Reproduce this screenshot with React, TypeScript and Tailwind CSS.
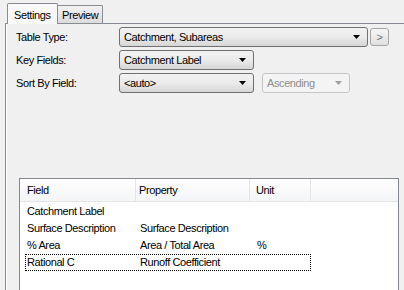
const FONT = "font-['Liberation_Sans',Arial,sans-serif] text-[11px] tracking-[-0.4px] text-black";

const ROWS = [
  { field: "Catchment Label", property: "", unit: "" },
  { field: "Surface Description", property: "Surface Description", unit: "" },
  { field: "% Area", property: "Area / Total Area", unit: "%" },
  { field: "Rational C", property: "Runoff Coefficient", unit: "", focused: true },
];

function Arrow({ disabled }: { disabled?: boolean }) {
  return (
    <svg width="7" height="4" viewBox="0 0 7 4" className="shrink-0">
      <path d="M0 0h7L3.5 4z" fill={disabled ? "#a0a0a0" : "#000"} />
    </svg>
  );
}

function Combo({ text, width, disabled }: { text: string; width: string; disabled?: boolean }) {
  return (
    <div
      className={
        disabled
          ? `${width} h-[20px] flex items-center justify-between pl-[4px] pr-[7px] rounded-[3px] border border-[#c2c6c9] bg-[#f4f4f4] text-[#8d8d8d]`
          : `${width} h-[20px] flex items-center justify-between pl-[4px] pr-[7px] rounded-[3px] border border-[#707070] bg-gradient-to-b from-[#f2f2f2] via-[#ebebeb] to-[#d6d6d6]`
      }
    >
      <span>{text}</span>
      <Arrow disabled={disabled} />
    </div>
  );
}

function Label({ children }: { children: string }) {
  return <div className="w-[103px] shrink-0">{children}</div>;
}

export default function App() {
  return (
    <div className={`w-[404px] h-[290px] overflow-hidden bg-[#f0f0f0] ${FONT}`}>
      {/* Tabs */}
      <div className="flex items-end h-[23px] pl-[7px]">
        <div className="h-[21px] w-[51px] relative top-[1px] z-10 border border-b-0 border-[#898c95] bg-[#f9f9f9] pl-[6px] pt-[3px] rounded-t-[2px]">
          Settings
        </div>
        <div className="h-[18px] w-[45px] border border-l-0 border-b-0 border-[#898c95] bg-gradient-to-b from-[#f2f2f2] to-[#dcdcdc] pl-[4px] pt-[1px] rounded-tr-[2px]">
          Preview
        </div>
      </div>

      {/* Panel */}
      <div className="ml-[5px] h-[267px] border-l border-t border-[#898c95]">
        <div className="h-full border-l border-white pt-[3px] pl-[9px]">
          <div className="flex flex-col gap-[3px]">
            <div className="flex items-center h-[20px]">
              <Label>Table Type:</Label>
              <Combo text="Catchment, Subareas" width="w-[249px]" />
              <div className="ml-[2px] w-[19px] h-[18px] rounded-[3px] border border-[#a5a5a5] bg-gradient-to-b from-[#f6f6f6] to-[#e0e0e0] flex items-center justify-center text-[#707070]">
                &gt;
              </div>
            </div>
            <div className="flex items-center h-[20px]">
              <Label>Key Fields:</Label>
              <Combo text="Catchment Label" width="w-[135px]" />
            </div>
            <div className="flex items-center h-[20px]">
              <Label>Sort By Field:</Label>
              <Combo text="<auto>" width="w-[135px]" />
              <div className="ml-[8px]">
                <Combo text="Ascending" width="w-[88px]" disabled />
              </div>
            </div>
          </div>

          {/* List view */}
          <div className="mt-[85px] ml-[3px] w-[380px] h-[120px] border border-[#828790] bg-white">
            <div className="flex h-[23px] border-b border-[#e5e5e5] bg-gradient-to-b from-white to-[#f4f5f7]">
              <div className="w-[116px] pl-[7px] flex items-center border-r border-[#e5e5e5]">Field</div>
              <div className="w-[114px] pl-[3px] flex items-center border-r border-[#e5e5e5]">Property</div>
              <div className="w-[61px] pl-[6px] flex items-center border-r border-[#e5e5e5]">Unit</div>
              <div className="flex-1" />
            </div>
            <div className="pt-[1px] pl-[5px]">
              {ROWS.map((row) => (
                <div
                  key={row.field}
                  className={
                    row.focused
                      ? "flex h-[17px] w-[286px] items-center border border-dotted border-black"
                      : "flex h-[17px] w-[286px] items-center border border-transparent"
                  }
                >
                  <div className="w-[110px] pl-[1px] whitespace-nowrap">{row.field}</div>
                  <div className="w-[114px] pl-[4px] whitespace-nowrap">{row.property}</div>
                  <div className="w-[60px] pl-[7px] whitespace-nowrap">{row.unit}</div>
                </div>
              ))}
            </div>
          </div>
        </div>
      </div>
    </div>
  );
}
